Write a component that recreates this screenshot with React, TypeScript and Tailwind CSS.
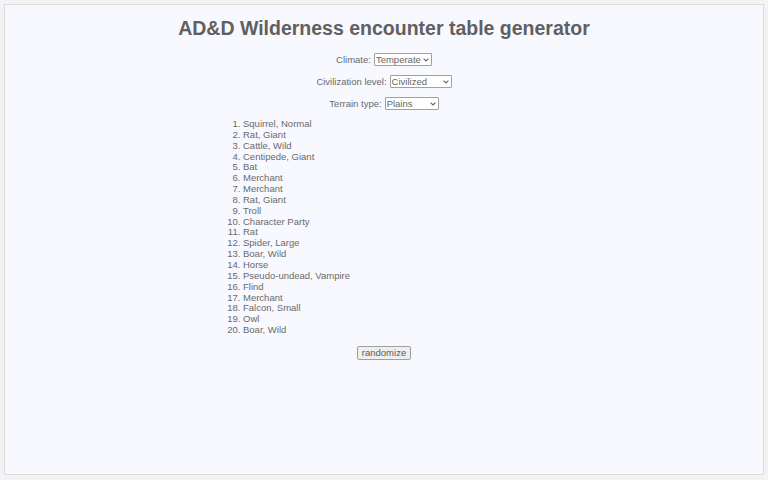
import React from "react";

const encounters = [
  "Squirrel, Normal",
  "Rat, Giant",
  "Cattle, Wild",
  "Centipede, Giant",
  "Bat",
  "Merchant",
  "Merchant",
  "Rat, Giant",
  "Troll",
  "Character Party",
  "Rat",
  "Spider, Large",
  "Boar, Wild",
  "Horse",
  "Pseudo-undead, Vampire",
  "Flind",
  "Merchant",
  "Falcon, Small",
  "Owl",
  "Boar, Wild",
];

function Field({ label, value, options, width }: { label: string; value: string; options: string[]; width: string }) {
  return (
    <div className="flex items-center justify-center gap-[3px] text-[9.5px] leading-[13px]">
      <label>{label}</label>
      <div className={`relative ${width} h-[13px]`}>
        <select
          defaultValue={value}
          className="h-full w-full appearance-none rounded-[1px] border border-[#a0a0a0] bg-white pl-[1px] pr-[8px] py-0 text-[9.5px] leading-[11px] text-[#666]"
        >
          {options.map((o) => (
            <option key={o}>{o}</option>
          ))}
        </select>
        {/* chevron */}
        <svg
          className="pointer-events-none absolute right-[3px] top-[4.5px] h-[4px] w-[6px]"
          viewBox="0 0 6 4"
          fill="none"
          stroke="#666"
          strokeWidth="1.1"
        >
          <path d="M0.6 0.6 L3 3 L5.4 0.6" />
        </svg>
      </div>
    </div>
  );
}

export default function App() {
  return (
    <div className="h-[480px] w-full bg-[#f3f3f3] p-1 font-['Liberation_Sans',Arial,sans-serif] text-[#6a6a6a]">
      <div className="flex h-[471px] flex-col border border-[#dcdcdc] bg-[#f8f8ff] pt-[12px]">
        <h1 className="text-center text-[19.5px] font-bold leading-[23px] text-[#606060]">
          AD&amp;D Wilderness encounter table generator
        </h1>

        <div className="mt-[13px] flex flex-col gap-[9px]">
          <Field label="Climate:" value="Temperate" options={["Arctic", "Subarctic", "Temperate", "Subtropical", "Tropical"]} width="w-[58px]" />
          <Field label="Civilization level:" value="Civilized" options={["Civilized", "Uncivilized", "Wilderness"]} width="w-[62px]" />
          <Field label="Terrain type:" value="Plains" options={["Plains", "Scrub", "Forest", "Rough", "Desert", "Hills", "Mountains", "Marsh"]} width="w-[54px]" />
        </div>

        <ol className="mt-[9px] list-decimal pl-[238px] text-[9.5px] leading-[10.85px]">
          {encounters.map((e, i) => (
            <li key={i}>{e}</li>
          ))}
        </ol>

        <div className="mt-[10px] flex justify-center">
          <button className="h-[14px] rounded-[2px] border border-[#a0a0a0] bg-[#efefef] px-[4px] text-[9.5px] leading-[12px] text-[#5a5a5a]">
            randomize
          </button>
        </div>
      </div>
    </div>
  );
}
